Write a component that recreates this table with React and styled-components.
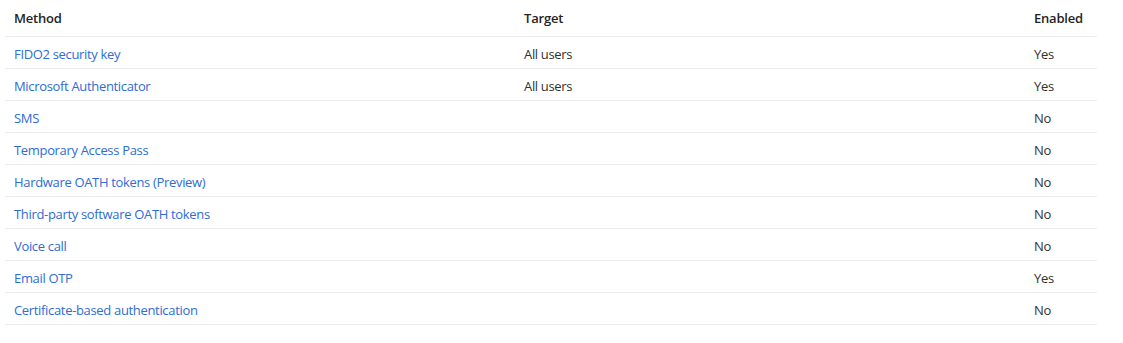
import styled, { createGlobalStyle } from "styled-components";

const GlobalStyle = createGlobalStyle`
  body {
    margin: 0;
    background: #ffffff;
    font-family: "Open Sans", "Noto Sans", sans-serif;
    color: #323130;
  }
`;

const Page = styled.div`
  padding: 0 26px 0 5px;
`;

const Table = styled.div`
  width: 1092px;
`;

const Row = styled.div`
  display: grid;
  grid-template-columns: 510px 510px 1fr;
  align-items: center;
  height: ${(props) => (props.$header ? "37px" : "32px")};
  padding-left: 9px;
  padding-top: ${(props) => (props.$header ? "0" : "3px")};
  border-bottom: 1px solid #edebe9;
  box-sizing: border-box;
  font-size: 13px;
  letter-spacing: -0.33px;
`;

const HeadCell = styled.div`
  font-weight: 600;
  color: #252423;
  letter-spacing: -0.2px;
`;

const Cell = styled.div`
  white-space: nowrap;
`;

const Link = styled.a`
  color: #2f6cd3;
  text-decoration: none;
  cursor: pointer;
`;

const methods = [
  { name: "FIDO2 security key", target: "All users", enabled: true },
  { name: "Microsoft Authenticator", target: "All users", enabled: true },
  { name: "SMS", target: "", enabled: false },
  { name: "Temporary Access Pass", target: "", enabled: false },
  { name: "Hardware OATH tokens (Preview)", target: "", enabled: false },
  { name: "Third-party software OATH tokens", target: "", enabled: false },
  { name: "Voice call", target: "", enabled: false },
  { name: "Email OTP", target: "", enabled: true },
  { name: "Certificate-based authentication", target: "", enabled: false },
];

export default function App() {
  return (
    <>
      <GlobalStyle />
      <Page>
        <Table>
          <Row $header>
            <HeadCell>Method</HeadCell>
            <HeadCell>Target</HeadCell>
            <HeadCell>Enabled</HeadCell>
          </Row>
          {methods.map((m) => (
            <Row key={m.name}>
              <Cell>
                <Link>{m.name}</Link>
              </Cell>
              <Cell>{m.target}</Cell>
              <Cell>{m.enabled ? "Yes" : "No"}</Cell>
            </Row>
          ))}
        </Table>
      </Page>
    </>
  );
}
